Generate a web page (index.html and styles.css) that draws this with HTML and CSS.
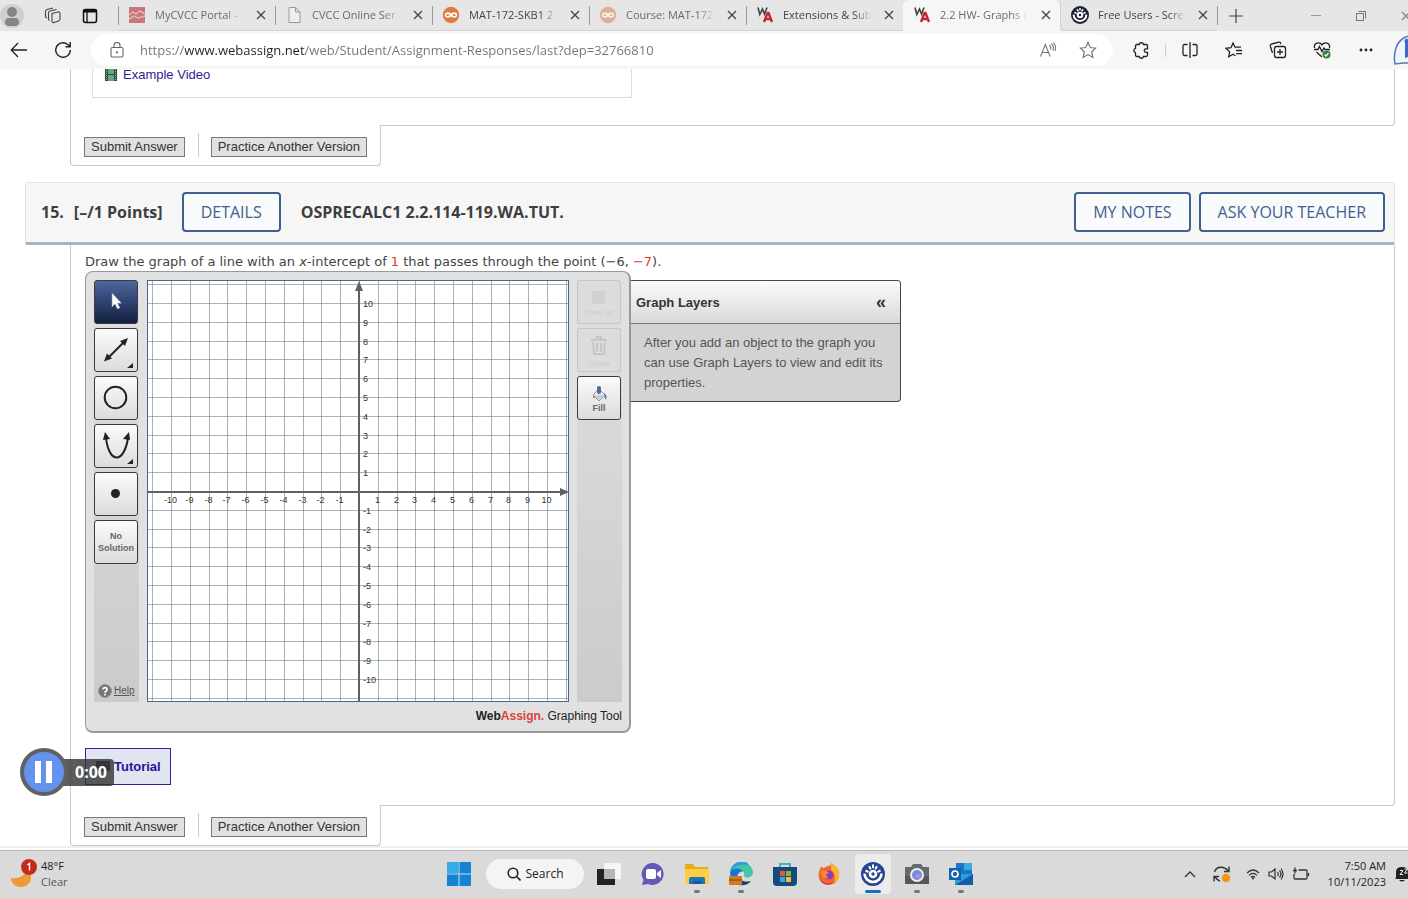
FILE: index.html
```html
<!DOCTYPE html>
<html lang="en">
<head>
<meta charset="utf-8">
<title>2.2 HW- Graphs of Linear Functions</title>
<link rel="stylesheet" href="styles.css">
</head>
<body>
<svg width="0" height="0" class="defs" aria-hidden="true">
  <defs>
    <symbol id="x" viewBox="0 0 10 10"><path d="M1 1l8 8M9 1l-8 8" fill="none" stroke="currentColor" stroke-width="1.3"/></symbol>
    <symbol id="moodle" viewBox="0 0 18 18"><circle cx="9" cy="9" r="8.2" fill="#dc7c42"/><path d="M9 9C7.5 6.6 3.6 6.4 3.6 9S7.500 11.400 9 9s5.400-2.600 5.400 0-3.900 2.400-5.400 0z" fill="none" stroke="#fff" stroke-width="1.700"/></symbol>
    <symbol id="wa" viewBox="0 0 18 18"><path d="M2 1.500l1.800 7L6.500 3l2 5L11 1.500" fill="none" stroke="#444" stroke-width="1.600"/><path d="M8 16L11.500 7h1L16 16M9 13h6" fill="none" stroke="#c3282d" stroke-width="2.400"/></symbol>
    <symbol id="reel" viewBox="0 0 24 24"><circle cx="12" cy="12" r="12" fill="var(--reel)"/><path d="M3.500 11.500a8.500 8.500 0 0 0 17 0" fill="none" stroke="#fff" stroke-width="2.600"/><path d="M4.500 8.500l3 1.500M8 4.200l1.800 3M12 2.500v3.500M16 4.200l-1.800 3M19.500 8.500l-3 1.500" stroke="#fff" stroke-width="2"/><circle cx="12" cy="12" r="4.300" fill="#fff"/><circle cx="12" cy="12" r="1.700" fill="var(--reel)"/></symbol>
  </defs>
</svg>

<header class="browser">
  <div class="tabbar">
    <div class="tab-tools">
      <button class="icon-btn" aria-label="Profile"><svg width="24" height="26" viewBox="0 0 24 26"><circle cx="12" cy="13" r="12" fill="#cfcfcf"/><circle cx="12" cy="9" r="5" fill="#858585"/><rect x="5" y="15" width="14" height="8" rx="4" fill="#858585"/></svg></button>
      <button class="icon-btn" aria-label="Workspaces"><svg width="18" height="18" viewBox="0 0 18 18" fill="none" stroke="#444" stroke-width="1.100"><path d="M8 6.500l6-1.500q2-.5 2 1.500v5.500q0 1.500-1.500 2L10 15.500q-2 .5-2-1.500zM5.500 13.500q-1-.5-1-1.500V6q0-1.500 1.500-2L12.500 2.500M3 11q-1.500-.5-1.500-1.500V4.500Q1.500 3 3 2.500L9 1"/></svg></button>
      <button class="icon-btn" aria-label="Tab actions"><svg width="16" height="16" viewBox="0 0 16 16"><rect x="1.500" y="1.500" width="13" height="13" rx="2" fill="none" stroke="#111" stroke-width="1.500"/><path d="M1 3h14" stroke="#111" stroke-width="3"/><path d="M5 4v10.500" stroke="#111" stroke-width="1.300"/></svg></button>
    </div>
    <div class="tab"><svg class="fav" viewBox="0 0 18 18"><rect x="1" y="1" width="16" height="16" fill="#c9757c"/><path d="M1 9l4-3 3 2 4-3 5 3M1 13l5-3 4 2 7-2" fill="none" stroke="#e5b4b7" stroke-width="1.500"/></svg><span class="title">MyCVCC Portal - </span><button class="icon-btn close" aria-label="Close tab"><svg width="10" height="10"><use href="#x"/></svg></button></div>
    <div class="tab"><svg class="fav" viewBox="0 0 18 18"><path d="M4 1.500h6.500L15 6v10.500H4zM10.500 1.500V6H15" fill="#eee" stroke="#999"/></svg><span class="title">CVCC Online Ser</span><button class="icon-btn close" aria-label="Close tab"><svg width="10" height="10"><use href="#x"/></svg></button></div>
    <div class="tab"><svg class="fav"><use href="#moodle"/></svg><span class="title dark">MAT-172-SKB1 2</span><button class="icon-btn close" aria-label="Close tab"><svg width="10" height="10"><use href="#x"/></svg></button></div>
    <div class="tab"><svg class="fav faded"><use href="#moodle"/></svg><span class="title">Course: MAT-172</span><button class="icon-btn close" aria-label="Close tab"><svg width="10" height="10"><use href="#x"/></svg></button></div>
    <div class="tab"><svg class="fav"><use href="#wa"/></svg><span class="title dark">Extensions &amp; Sub</span><button class="icon-btn close" aria-label="Close tab"><svg width="10" height="10"><use href="#x"/></svg></button></div>
    <div class="tab active"><svg class="fav"><use href="#wa"/></svg><span class="title">2.2 HW- Graphs o</span><button class="icon-btn close" aria-label="Close tab"><svg width="10" height="10"><use href="#x"/></svg></button></div>
    <div class="tab last"><svg class="fav"><use href="#reel"/></svg><span class="title dark">Free Users - Scre</span><button class="icon-btn close" aria-label="Close tab"><svg width="10" height="10"><use href="#x"/></svg></button></div>
    <button class="icon-btn new-tab" aria-label="New tab"><svg width="14" height="14" viewBox="0 0 14 14"><path d="M7 0v14M0 7h14" stroke="#444" stroke-width="1.200"/></svg></button>
    <div class="win">
      <button class="icon-btn" aria-label="Minimize"><svg width="10" height="10" viewBox="0 0 10 10"><path d="M0 4.500h10" stroke="#999"/></svg></button>
      <button class="icon-btn" aria-label="Restore"><svg width="10" height="10" viewBox="0 0 10 10" fill="none" stroke="#777"><rect x=".5" y="2.500" width="7" height="7"/><path d="M2.500 .5h7v7"/></svg></button>
      <button class="icon-btn" aria-label="Close"><svg width="10" height="10"><use href="#x"/></svg></button>
    </div>
  </div>
  <div class="toolbar">
    <button class="icon-btn" aria-label="Back"><svg width="18" height="16" viewBox="0 0 18 16" fill="none" stroke="#222" stroke-width="1.300"><path d="M17 8H1.500M8 1L1.300 8 8 15"/></svg></button>
    <button class="icon-btn" aria-label="Refresh"><svg width="18" height="18" viewBox="0 0 18 18" fill="none" stroke="#222" stroke-width="1.400"><path d="M16.300 9a7.300 7.300 0 1 1-2.500-5.500L16 5.500M16.200 1v4.700h-4.700"/></svg></button>
    <div class="address">
      <svg width="14" height="16" viewBox="0 0 14 16" fill="none" stroke="#666" stroke-width="1.100"><rect x="1" y="5.500" width="12" height="9.500" rx="1.500"/><path d="M4 5.500V3.500a3 3 0 0 1 6 0v2"/><circle cx="7" cy="10.300" r=".6" fill="#666"/></svg>
      <input class="url" aria-label="Address" value="https://www.webassign.net/web/Student/Assignment-Responses/last?dep=32766810">
      <button class="icon-btn" aria-label="Read aloud"><svg width="18" height="16" viewBox="0 0 18 16" fill="none" stroke="#777" stroke-width="1.100"><path d="M1.500 14.500L6.300 2.500l4.900 12M3 10.500h6.600M10.500 3a4 4 0 0 1 1 4.500M12.500 1.500a6 6 0 0 1 1.200 7M14.500 .5a8 8 0 0 1 1.300 8.500"/></svg></button>
      <button class="icon-btn" aria-label="Favorite"><svg width="18" height="18" viewBox="0 0 18 18" fill="none" stroke="#777" stroke-width="1.200"><path d="M9 1.500l2.300 5 5.400.6-4 3.700 1.100 5.500L9 13.600l-4.800 2.700 1.100-5.500-4-3.700 5.400-.6z"/></svg></button>
    </div>
    <div class="tools">
      <button class="icon-btn" aria-label="Extensions"><svg width="18" height="18" viewBox="0 0 18 18" fill="none" stroke="#222" stroke-width="1.300"><path d="M5 3.500h2.200a2.200 2.200 0 0 1 4.300 0H14q1.500 0 1.500 1.500v2.800h-1.500a1.800 1.800 0 0 0 0 3.600h1.500V14q0 1.500-1.500 1.500h-2.500a2.200 2.200 0 0 1-4.300 0H5Q3.500 15.500 3.500 14v-2.300a2.200 2.200 0 0 1 0-4.300V5Q3.500 3.500 5 3.500z"/></svg></button>
      <button class="icon-btn split" aria-label="Split screen"><svg width="16" height="16" viewBox="0 0 16 16" fill="none" stroke="#222" stroke-width="1.300"><path d="M5.500 2.500H2.500Q1 2.500 1 4v8q0 1.500 1.500 1.500h3M10.500 2.500h3Q15 2.500 15 4v8q0 1.500-1.500 1.500h-3M8 0v16"/></svg></button>
      <button class="icon-btn" aria-label="Favorites"><svg width="18" height="18" viewBox="0 0 18 18" fill="none" stroke="#222" stroke-width="1.300"><path d="M10.500 14.700L8 13.200 3.700 15.800l1-4.900L1 7.300l5-.6 2-4.700 2 4.200h6M11 9.500h6M11 12.700h6"/></svg></button>
      <button class="icon-btn" aria-label="Collections"><svg width="18" height="18" viewBox="0 0 18 18" fill="none" stroke="#222" stroke-width="1.300"><rect x="5.500" y="5.500" width="11" height="11" rx="2"/><path d="M11 8v6M8 11h6M3.500 12L1.300 5Q1 3.500 2.500 3L10 1.200q1.500-.2 2 1.800"/></svg></button>
      <button class="icon-btn" aria-label="Browser essentials"><svg width="18" height="18" viewBox="0 0 18 18" fill="none" stroke="#222" stroke-width="1.300"><path d="M1.500 7C.5 1.500 7 .5 9 4c2-3.500 8.500-2.500 7.500 3M1 8.500h4l1.500-3 2.500 5 2-3.500 1 1.500h5M3.500 11L9 16"/><circle cx="13.500" cy="13.500" r="4" fill="#3a7d3a" stroke="none"/><path d="M11.500 13.600l1.500 1.400 2.500-3" stroke="#fff"/></svg></button>
      <button class="icon-btn" aria-label="Settings and more"><svg width="16" height="4" viewBox="0 0 16 4" fill="#222"><circle cx="3" cy="2" r="1.400"/><circle cx="8" cy="2" r="1.400"/><circle cx="13" cy="2" r="1.400"/></svg></button>
      <button class="icon-btn" aria-label="Bing chat"><svg width="34" height="32" viewBox="0 0 34 32"><path d="M2 30c-1-5-1-10 1-16C6 5 14 1 20 2c8 1 13 7 13 14 0 9-7 14-15 13H10z" fill="#f1f6fd" stroke="#5878b8" stroke-width="1.500"/><path d="M12 6l2 1v14l6-3" fill="none" stroke="#3a69cf" stroke-width="4"/></svg></button>
    </div>
  </div>
</header>

<main class="page">
  <section class="question">
    <div class="body first">
      <div class="resources"><a href="#video"><svg width="12" height="12" viewBox="0 0 12 12"><rect width="12" height="12" fill="#294f3d"/><path d="M3 0h6v5H3zM3 6h6v6H3z" fill="#67a486"/><path d="M1.500 0v12M10.500 0v12" stroke="#9ab8a6" stroke-dasharray="1 1"/></svg>Example Video</a></div>
    </div>
    <div class="actions"><button class="btn">Submit Answer</button><span class="rule"></span><button class="btn">Practice Another Version</button></div>
  </section>

  <div class="qheader">
    <strong class="num">15.</strong><strong class="pts">[–/1 Points]</strong>
    <button class="outline">DETAILS</button>
    <strong class="code">OSPRECALC1 2.2.114-119.WA.TUT.</strong>
    <button class="outline notes">MY NOTES</button>
    <button class="outline">ASK YOUR TEACHER</button>
  </div>

  <section class="question">
    <div class="body second">
      <p class="prompt">Draw the graph of a line with an <i>x</i>-intercept of <span class="rand">1</span> that passes through the point (−6, <span class="rand">−7</span>).</p>
      <div class="graph-row">
        <div class="gtool">
          <div class="gmain">
            <div class="gcol">
              <button class="gbtn on" aria-label="Select"><svg width="44" height="44" viewBox="0 0 44 44"><path d="M18 13v14l3-3 2.500 5 2.500-1.200-2.500-4.600h4z" fill="#fff" stroke="#8995ad" stroke-width=".6"/></svg></button>
              <button class="gbtn" aria-label="Line"><svg width="44" height="44" viewBox="0 0 44 44"><path d="M14 30L31 13" stroke="#222" stroke-width="2"/><path d="M10 33.500l3-8 5 5zM34 10l-8 3 5 5zM39 40v-5l-6 5z" fill="#222"/></svg></button>
              <button class="gbtn" aria-label="Circle"><svg width="44" height="44" viewBox="0 0 44 44"><circle cx="21.500" cy="21.500" r="10.800" fill="none" stroke="#222" stroke-width="2"/></svg></button>
              <button class="gbtn" aria-label="Parabola"><svg width="44" height="44" viewBox="0 0 44 44"><path d="M12 14c3 26 18 26 22 0" fill="none" stroke="#222" stroke-width="2"/><path d="M11 8l-2 8 7-1zM35 8l-6 7 7 1zM39 40v-5l-6 5z" fill="#222"/></svg></button>
              <button class="gbtn" aria-label="Point"><svg width="44" height="44" viewBox="0 0 44 44"><circle cx="21.500" cy="21.500" r="4.500" fill="#222"/></svg></button>
              <button class="gbtn label">No<br>Solution</button>
              <a class="help" href="#help"><svg width="14" height="14" viewBox="0 0 14 14"><circle cx="7" cy="7" r="6.500" fill="#777" stroke="#999"/><path d="M5 5.500a2 2 0 1 1 2.500 2L7 9M7 10v1.500" fill="none" stroke="#fff" stroke-width="1.700"/></svg>Help</a>
            </div>
            <svg id="graph" class="graph" width="422" height="422" viewBox="0 0 422 422" role="img" aria-label="Coordinate grid from -11 to 11"></svg>
            <div class="gcol">
              <button class="gbtn off" disabled><svg width="24" height="18" viewBox="0 0 24 18"><rect x="5" y="2" width="13" height="13" fill="#d0d0d0"/></svg>Clear All</button>
              <button class="gbtn off" disabled><svg width="24" height="24" viewBox="0 0 24 24"><path d="M4 6h16M10 6V3h4v3M6 8l1 12h10l1-12M10 9v9M14 9v9" fill="none" stroke="#c6c6c6" stroke-width="2"/></svg>Delete</button>
              <button class="gbtn label"><svg width="18" height="18" viewBox="0 0 18 18"><path d="M3 10l6-6 6 6-6 6z" fill="#e9edf5" stroke="#8995ad"/><path d="M4 10h10l-5 5z" fill="#c5ccdb"/><rect x="7" y="1" width="4" height="8" rx="2" fill="#536a96"/><path d="M14 8q4 2 2 7-2-2-2-7z" fill="#7083aa"/><circle cx="4" cy="12" r="1" fill="#d8735f"/></svg>Fill</button>
            </div>
          </div>
          <div class="brand"><b>Web<span>Assign.</span></b> Graphing Tool</div>
        </div>
        <aside class="layers">
          <h2>Graph Layers <button class="icon-btn collapse" aria-label="Collapse">«</button></h2>
          <p>After you add an object to the graph you can use Graph Layers to view and edit its properties.</p>
        </aside>
      </div>
      <a class="tutorial" href="#tutorial"><svg width="16" height="14" viewBox="0 0 16 14"><rect x="1" y="1" width="14" height="10" fill="#333a55"/><path d="M3 4h2M7 4h2M11 4h2" stroke="#98a"/></svg>Tutorial</a>
    </div>
    <div class="actions"><button class="btn">Submit Answer</button><span class="rule"></span><button class="btn">Practice Another Version</button></div>
  </section>
</main>

<div class="recorder">
  <button class="pause" aria-label="Pause recording"><svg width="18" height="22" viewBox="0 0 18 22" fill="#fff"><rect width="6" height="22"/><rect x="11" width="6" height="22"/></svg></button>
  <span class="time">0:00</span>
</div>

<footer class="taskbar">
  <button class="weather"><svg width="28" height="30" viewBox="0 0 28 30"><path d="M1 19c8 1 13-2 16-7 7 2 5 16-6 16-6 0-10-4-10-9z" fill="#ee9a35"/><circle cx="19" cy="8" r="8" fill="#c42b1c"/><path d="M17.500 6L19.500 4.500v7" fill="none" stroke="#fff" stroke-width="1.400"/></svg><span>48°F<small>Clear</small></span></button>
  <div class="apps">
    <button class="app" aria-label="Start"><svg width="24" height="24" viewBox="0 0 24 24"><path d="M0 0h11.500v11.500H0zM12.500 0H24v11.500H12.500zM0 12.500h11.500V24H0zM12.500 12.500H24V24H12.500z" fill="#1483d3"/><path d="M0 0h11.500v11.500H0z" fill="#35aee8"/></svg></button>
    <button class="search"><svg width="14" height="14" viewBox="0 0 14 14" fill="none" stroke="#222" stroke-width="1.600"><circle cx="6" cy="6" r="4.800"/><path d="M9.500 9.500L13.500 13.500"/></svg>Search</button>
    <button class="app" aria-label="Task view"><svg width="24" height="24" viewBox="0 0 24 24"><rect x="7" y="1" width="17" height="16" fill="#f5f5f5"/><rect x="0" y="7" width="18" height="16" fill="#222"/><rect x="7" y="7" width="11" height="10" fill="#b5b5b5"/></svg></button>
    <button class="app" aria-label="Chat"><svg width="24" height="24" viewBox="0 0 24 24"><path d="M12 1a11 11 0 1 1-5 21l-6 1 1.500-5A11 11 0 0 1 12 1z" fill="#6259b8"/><rect x="5" y="7" width="10" height="10" rx="2" fill="#fff"/><path d="M16 11l4-3v8l-4-3z" fill="#fff"/></svg></button>
    <button class="app run" aria-label="File Explorer"><svg width="24" height="24" viewBox="0 0 24 24"><path d="M0 2h8l2 3h13v17H0z" fill="#e8a91f"/><path d="M0 7h24v15H0z" fill="#fbce45"/><path d="M4 22v-5q0-2 2-2h12q2 0 2 2v5z" fill="#1977b8"/><path d="M8 19h8v3H8z" fill="#155a93"/></svg></button>
    <button class="app run" aria-label="Edge"><svg width="24" height="24" viewBox="0 0 24 24"><path d="M1 10C3-3 22-3 24 10c0 6-8 7-9 4 1-2 0-5-4-5-4 0-7 2-8 6z" fill="#43c6a8"/><path d="M1 10C3-2 17-3 20 3 14 2 5 3 1 10z" fill="#2f9fda"/><path d="M1 10c4-5 10-4 13-1-5 1-7 5-5 10l-7-1z" fill="#1678c8"/><path d="M9 12c0 6 6 9 13 7-3 4-8 5-12 4z" fill="#173f66"/><rect x="0" y="14" width="13" height="9" rx="1" fill="#d17b20"/><path d="M0 18h13" stroke="#7a430d"/></svg></button>
    <button class="app" aria-label="Microsoft Store"><svg width="24" height="24" viewBox="0 0 24 24"><path d="M7 6V2h10v4" fill="none" stroke="#44aed5" stroke-width="2"/><path d="M0 5h24v15q0 4-4 4H4q-4 0-4-4z" fill="#174a7c"/><path d="M7 9h5v5H7z" fill="#e95a32"/><path d="M13 9h5v5h-5z" fill="#83b93a"/><path d="M7 15h5v5H7z" fill="#36a6df"/><path d="M13 15h5v5h-5z" fill="#f6bd3a"/></svg></button>
    <button class="app" aria-label="Firefox"><svg width="22" height="22" viewBox="0 0 22 22"><path d="M3 4l3 1c4-3 7-1 7-5 5 3 9 7 8 13-2 11-17 12-20 2C0 11 1 7 3 4z" fill="#f5662f"/><path d="M13 0c5 3 9 7 8 13-1 4-3 6-5 7 2-6 1-10-3-13z" fill="#fdb52c"/><circle cx="11" cy="12" r="4.500" fill="#8a3fc0"/><path d="M3 8c3-1 6 0 8 2-4 0-3 4 0 5-5 1-8-2-8-7z" fill="#fb8b2d"/><path d="M1 14c3 6 9 8 15 5-4 4-13 4-15-5z" fill="#e32b66"/></svg></button>
    <button class="app current" aria-label="Screen recorder"><svg class="blue" width="24" height="24"><use href="#reel"/></svg></button>
    <button class="app run" aria-label="Camera"><svg width="24" height="22" viewBox="0 0 24 22"><path d="M0 4h6l2-3h8l2 3h6v17H0z" fill="#65696d"/><path d="M0 13h24v8H0z" fill="#55595d"/><circle cx="12" cy="12" r="7" fill="#eee"/><circle cx="12" cy="12" r="5" fill="#748ed8"/><circle cx="13" cy="13" r="2.500" fill="#b28dde"/></svg></button>
    <button class="app run" aria-label="Outlook"><svg width="24" height="24" viewBox="0 0 24 24"><path d="M7 1h16v13H7z" fill="#1d76c4"/><path d="M15 1h8v7h-8z" fill="#39a9e5"/><path d="M6 12h18v11H6z" fill="#2b9de0"/><path d="M6 23l18-11v11z" fill="#155da5"/><rect x="0" y="6" width="12" height="12" fill="#1261ac"/><circle cx="6" cy="12" r="3" fill="none" stroke="#fff" stroke-width="1.700"/></svg></button>
  </div>
  <div class="tray">
    <button class="icon-btn" aria-label="Hidden icons"><svg width="12" height="8" viewBox="0 0 12 8"><path d="M1 7l5-5 5 5" fill="none" stroke="#333" stroke-width="1.300"/></svg></button>
    <button class="icon-btn sync" aria-label="Update"><svg width="18" height="18" viewBox="0 0 18 18" fill="none" stroke="#333" stroke-width="1.400"><path d="M1.500 7C3 2 10 0 15 5.500M16 1.500v5h-5M7 16q-3-1-5-4M1 16.500v-5h5"/><circle cx="13" cy="13" r="4.300" fill="#f5941e" stroke="none"/></svg></button>
    <button class="icon-btn net" aria-label="Network, volume, battery">
      <svg width="14" height="12" viewBox="0 0 14 12" fill="none" stroke="#333" stroke-width="1.200"><path d="M1 5q6-6 12 0M3 7.300q4-4 8 0M5 9.500q2-2 4 0"/><circle cx="7" cy="10.500" r="1" fill="#333" stroke="none"/></svg>
      <svg width="16" height="14" viewBox="0 0 16 14" fill="none" stroke="#333" stroke-width="1.200"><path d="M1 5h2.500L7 2v10L3.500 9H1zM9.500 5q1.500 2 0 4M11.500 3.500q3 3.500 0 7M13 1.500q4 5.500 0 11"/></svg>
      <svg width="18" height="14" viewBox="0 0 18 14" fill="none" stroke="#333" stroke-width="1.300"><path d="M6.500 3H14q1 0 1 1v7q0 1-1 1H3q-1 0-1-1V7M16.500 6v3M1 3.500h4M3 .5v6"/></svg>
    </button>
    <button class="clock">7:50 AM<br>10/11/2023</button>
    <button class="icon-btn" aria-label="Notifications"><svg width="16" height="18" viewBox="0 0 16 18"><path d="M2 13V7q0-5 6-5t6 5v6l1 1H1zM5 15h6q-3 3-6 0z" fill="#222"/><path d="M6 5.500h3l-3 4h3M10.500 4h3l-3 4h3" fill="none" stroke="#eee"/></svg></button>
  </div>
</footer>
<script src="graph.js"></script>
</body>
</html>
```

FILE: styles.css
```css
* { box-sizing: border-box; }
body { margin: 0; height: 100vh; overflow: hidden; display: flex; flex-direction: column; background: #fff; font-family: "Liberation Sans", Arial, sans-serif; font-size: 13px; color: #444; }
button { font: inherit; color: inherit; cursor: pointer; }
.defs { position: absolute; }
.icon-btn { border: 0; padding: 0; background: none; display: flex; align-items: center; justify-content: center; flex: none; }
.icon-btn svg { flex: none; }

/* Browser chrome */
.browser { --reel: #1b1f3b; flex: none; overflow: hidden; background: #f6f6f6; font-family: "Open Sans", "Noto Sans", sans-serif; }
.tabbar { display: flex; align-items: stretch; height: 31px; margin-right: -20px; background: #e6e6e6; }
.tab-tools { width: 118px; flex: none; display: flex; align-items: center; gap: 20px; }
.tab { flex: 0 1 157px; min-width: 0; display: flex; align-items: center; gap: 9px; padding: 0 6px 1px 10px; position: relative; border-bottom: 1px solid #d2d2d2; }
.tab::before { content: ""; position: absolute; left: 0; top: 6px; height: 19px; width: 1px; background: #999; }
.tab.active { background: #f6f6f6; border-color: #f6f6f6; border-radius: 6px 6px 0 0; }
.tab.active::before, .tab.last::before { display: none; }
.tab.last { border-left: 1px solid #d2d2d2; border-radius: 0 0 0 6px; }
.fav { width: 18px; height: 18px; flex: none; }
.faded { opacity: .5; }
.title { flex: 1; min-width: 0; white-space: nowrap; font-size: 11px; color: #6a6a6a; mask-image: linear-gradient(to right, #000 80%, transparent); }
.title.dark { color: #444; }
.close { width: 16px; height: 16px; color: #444; }
.new-tab { width: 37px; border-left: 1px solid #999; height: 19px; align-self: center; }
.win { margin-left: auto; display: flex; color: #888; }
.win .icon-btn { width: 45px; }
.toolbar { display: flex; align-items: center; height: 38px; padding-left: 9px; margin-right: -24px; }
.toolbar > .icon-btn { width: 20px; margin-right: 24px; }
.toolbar > .icon-btn + .icon-btn { margin-right: 18px; }
.address { flex: 1; display: flex; align-items: center; height: 32px; padding: 0 16px 0 19px; gap: 16px; background: #fff; border-radius: 16px; }
.address .icon-btn { width: 18px; margin-left: 6px; }
.url { flex: 1; min-width: 0; border: 0; padding: 0; outline: 0; font: 13px "Open Sans", sans-serif; color: transparent; background: linear-gradient(to right, #737373 45px, #222 45px, #222 165px, #737373 165px); background-clip: text; -webkit-background-clip: text; }
.tools { display: flex; padding-left: 6px; }
.tools .icon-btn { width: 44px; height: 32px; }
.tools .split { width: 49px; padding-left: 5px; background: linear-gradient(#ccc, #ccc) no-repeat 2px 10px / 1px 13px; }

/* Assignment page */
.page { flex: 1; min-height: 0; overflow: hidden; padding: 0 13px 0 25px; border-bottom: 2px solid #eee; }
.question { margin-left: 45px; }
.body { border: 1px solid #c9c9c9; border-top: 0; border-radius: 0 0 4px 0; }
.first { height: 57px; padding-left: 21px; }
.resources { width: 540px; height: 29px; border: 1px solid #ddd; border-top: 0; padding-left: 12px; }
.resources a { display: flex; align-items: center; gap: 6px; line-height: 10px; color: #36208c; text-decoration: none; }
.actions { position: relative; display: flex; align-items: center; width: max-content; height: 41px; margin-top: -1px; padding: 4px 13px 0; background: #fff; border: 1px solid #c9c9c9; border-top: 0; border-radius: 0 0 4px 4px; }
.btn { height: 20px; padding: 0 6px; border: 1px solid #777; background: #e1e1e1; line-height: 18px; color: #333; }
.rule { width: 1px; height: 24px; margin: 0 12px 4px 13px; background: #ccc; }
.qheader { display: flex; align-items: center; height: 63px; margin-top: 16px; padding: 0 9px 2px 15px; background: #f6f6f6; border-top: 1px solid #e6e6e6; border-left: 1px solid #e3e3e3; border-right: 1px solid #e3e3e3; border-bottom: 3px solid #a4b4c2; border-radius: 2px; font-family: "Open Sans", sans-serif; font-size: 16px; color: #3e3e3e; }
.pts { margin: 0 19px 0 10px; }
.code { margin-left: 20px; }
.outline { height: 40px; padding: 0 17px; border: 2px solid #41608f; border-radius: 4px; background: #f9fafc; color: #41608f; }
.notes { margin: 0 8px 0 auto; }
.second { padding: 8px 0 20px 14px; }
.prompt { margin: 0 0 1px; font-family: "DejaVu Sans", Verdana, sans-serif; line-height: 17px; }
.rand { color: #dd3b1f; }
.graph-row { display: flex; align-items: flex-start; }
.gtool { position: relative; padding: 7px; border: 2px solid #999; border-width: 1px 2px 2px 1px; border-radius: 8px; background: #e1e1e1; }
.gmain { display: flex; gap: 8px; padding: 1px 0 0 1px; }
.gcol { width: 45px; display: flex; flex-direction: column; gap: 4px; background: linear-gradient(#e0e0e0, #cbcbcb); }
.gbtn { width: 44px; height: 44px; padding: 0; border: 1px solid #3a3a3a; border-radius: 3px; background: linear-gradient(#fafafa, #dcdcdc); display: block; overflow: hidden; }
.gbtn > svg { display: block; margin: -1px; }
.on { background: linear-gradient(#4c679f, #141f40); }
.label { font-size: 9px; line-height: 12px; font-weight: bold; color: #666; }
.label > svg { margin: 3px auto -1px; }
.off { border-color: #c6c6c6; background: #dcdcdc; font-size: 8px; line-height: 8px; color: #cecece; }
.off > svg { margin: 2px auto; }
.help { margin-top: auto; padding: 0 0 4px 4px; display: flex; align-items: center; gap: 2px; font-size: 10px; line-height: 14px; color: #555; }
.graph { background: #fff; display: block; }
.brand { text-align: right; font-size: 12px; line-height: 16px; margin-top: 6px; color: #222; }
.brand span { color: #dc4438; }
.layers { width: 271px; margin: 9px 0 0 -1px; border: 1px solid #444; border-left: 0; border-radius: 0 4px 4px 0; background: #d3d3d3; overflow: hidden; }
.layers h2 { display: flex; align-items: center; justify-content: space-between; height: 43px; margin: 0; padding: 0 14px 0 6px; font-size: 13px; color: #333; background: linear-gradient(#fbfbfb, #d9d9d9); border-bottom: 1px solid #777; }
.collapse { font-size: 18px; font-weight: bold; }
.layers p { margin: 0; padding: 9px 14px 8px; line-height: 20px; color: #555; }
.tutorial { display: flex; align-items: center; gap: 3px; width: max-content; height: 37px; margin-top: 15px; padding: 0 9px; border: 1px solid #34209a; background: #e1e4f1; color: #2b1297; font-weight: bold; text-decoration: none; }

/* Recording overlay */
.recorder { position: absolute; left: 20px; bottom: 102px; display: flex; align-items: center; font-family: "Open Sans", sans-serif; }
.pause { width: 48px; height: 48px; padding: 0; border: 4px solid #606060; border-radius: 50%; background: #6393ee; display: flex; align-items: center; justify-content: center; z-index: 1; }
.time { height: 27px; margin-left: -10px; padding: 0 7px 0 17px; border-radius: 0 4px 4px 0; background: rgba(50, 50, 50, .8); color: #fff; font-weight: bold; font-size: 16px; line-height: 27px; }

/* Windows taskbar */
.taskbar { --reel: #27468f; flex: none; height: 48px; margin: 2px -12px 0 0; padding-bottom: 2px; display: grid; grid-template-columns: 1fr auto 1fr; align-items: center; background: #dadada; border-top: 1px solid #b8b8b8; font-family: "Open Sans", sans-serif; font-size: 11px; color: #222; }
.weather { justify-self: start; display: flex; align-items: center; gap: 3px; padding: 0 0 0 10px; border: 0; background: none; text-align: left; line-height: 16px; }
.weather small { display: block; font-size: 11px; color: #555; }
.apps { display: flex; align-items: center; }
.app { position: relative; width: 36px; height: 40px; margin: 0 4px; padding: 0; border: 0; border-radius: 4px; background: none; display: flex; align-items: center; justify-content: center; }
.run::after, .current::after { content: ""; position: absolute; bottom: 1px; width: 6px; height: 3px; border-radius: 2px; background: #777; }
.current { background: #ececec; }
.current::after { width: 16px; background: #1670c0; }
.search { width: 98px; height: 30px; margin: 0 3px 0 5px; padding: 0; border: 0; border-radius: 15px; background: #f4f4f4; display: flex; align-items: center; justify-content: center; gap: 5px; font-size: 12px; }
.tray { justify-self: end; display: flex; align-items: center; padding-right: 10px; }
.sync { margin: 0 15px 0 17px; }
.net { gap: 8px; }
.clock { padding: 0; margin: 0 8px 0 18px; border: 0; background: none; text-align: right; line-height: 16px; }

.graph .bg { fill: #fff; stroke: #4a6787; }
.graph .grid { stroke: #5c7482; stroke-opacity: .55; fill: none; }
.graph .axis { stroke: #5a6268; stroke-width: 2; }
.graph .tip { fill: #5a6268; }
.graph text { font-size: 9px; fill: #333; }
```

FILE: graph.js
```js
const STEP = 18.8, MID = 212;
let d = "", labels = "";
for (let i = -11; i <= 11; i++) {
  const p = Math.round(MID + i * STEP) + 0.5;
  d += `M${p} 1V421M1 ${p - 1}H421`;
  if (i !== 0 && Math.abs(i) !== 11) {
    labels += `<text x="${p - 1}" y="223" text-anchor="middle">${i}</text>`;
    labels += `<text x="216" y="${p + 2}">${-i}</text>`;
  }
}
document.getElementById("graph").innerHTML =
  `<rect class="bg" x=".5" y=".5" width="421" height="421"/>` +
  `<path class="grid" d="${d}"/>` +
  `<path class="axis" d="M212 4V421M1 212H418"/>` +
  `<path class="tip" d="M212 1l4 10h-8zM422 212l-9-4v8z"/>` + labels;
```
